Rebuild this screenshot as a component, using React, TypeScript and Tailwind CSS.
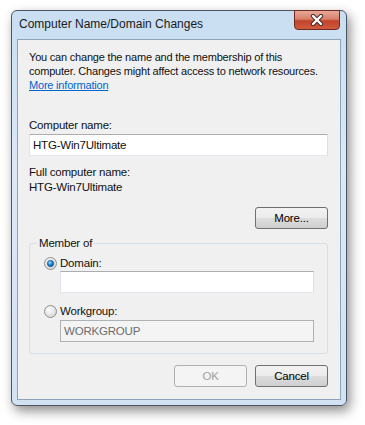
import React from "react";

function Radio({ checked }: { checked: boolean }) {
  return (
    <svg width="13" height="13" viewBox="0 0 13 13" className="shrink-0">
      <defs>
        <radialGradient id={checked ? "rc" : "ru"} cx="40%" cy="35%" r="70%">
          <stop offset="0%" stopColor="#ffffff" />
          <stop offset="100%" stopColor="#d4d4d4" />
        </radialGradient>
        <radialGradient id="dot" cx="40%" cy="35%" r="70%">
          <stop offset="0%" stopColor="#9ae0ff" />
          <stop offset="50%" stopColor="#1f8ad0" />
          <stop offset="100%" stopColor="#0b4a8a" />
        </radialGradient>
      </defs>
      <circle cx="6.5" cy="6.5" r="6" fill={checked ? "url(#rc)" : "url(#ru)"} stroke="#8e8f8f" strokeWidth="1" />
      {checked && <circle cx="6.5" cy="6.5" r="3.2" fill="url(#dot)" stroke="#1a4f7f" strokeWidth="0.6" />}
    </svg>
  );
}

function Button({ label, disabled }: { label: string; disabled?: boolean }) {
  return (
    <div
      className={`w-[73px] h-[22px] rounded-[3px] border flex items-center justify-center ${
        disabled
          ? "border-[#adb2b5] bg-[#f4f4f4] text-[#a0a0a0]"
          : "border-[#707070] bg-[linear-gradient(to_bottom,#f2f2f2_0%,#ebebeb_50%,#dddddd_51%,#cfcfcf_100%)] text-black"
      }`}
    >
      {label}
    </div>
  );
}

export default function App() {
  return (
    <div className="w-[365px] h-[425px] bg-white overflow-hidden font-['Liberation_Sans',sans-serif] text-[11.5px] tracking-[-0.2px] leading-[14px] text-[#111]">
      <div className="relative mt-[10px] ml-[11px] w-[336px] rounded-[6px] border border-[#4b5563] bg-[linear-gradient(to_bottom,#c9def2_0%,#dbe8f6_40%,#d2e2f3_100%)] pt-[28px] px-[5px] pb-[5px] shadow-[3px_5px_12px_rgba(0,0,0,0.45)]">
        {/* Title */}
        <div className="absolute left-[7px] top-[6px] text-[12px] tracking-normal leading-[14px] text-[#1a1a1a]">
          Computer Name/Domain Changes
        </div>
        {/* Close button */}
        <div className="absolute right-[6px] -top-px w-[46px] h-[20px] rounded-b-[4px] border border-[#6e2a1e] bg-[linear-gradient(to_bottom,#e8a999_0%,#d8806a_45%,#c2432c_55%,#d05a40_100%)] flex items-center justify-center">
          <svg width="14" height="12" viewBox="0 0 14 12">
            <path d="M3 2 L11 10 M11 2 L3 10" stroke="#3a2a2a" strokeWidth="4.2" strokeLinecap="round" />
            <path d="M3 2 L11 10 M11 2 L3 10" stroke="#ffffff" strokeWidth="2.4" strokeLinecap="round" />
          </svg>
        </div>

        {/* Client */}
        <div className="border border-[#8ea3ba] bg-[#f0f0f0] pt-[10px] pb-[12px] pl-[11px] pr-[12px]">
          <p className="whitespace-nowrap text-[11px] tracking-[-0.2px]">
            You can change the name and the membership of this
            <br />
            computer. Changes might affect access to network resources.
            <br />
            <span className="text-[#0066cc] underline">More information</span>
          </p>

          <div className="mt-[26px]">Computer name:</div>
          <div className="mt-[2px] h-[22px] border border-[#abadb3] border-l-[#e2e3ea] border-r-[#dbdfe6] border-b-[#e3e9ef] bg-white flex items-center px-[3px]">
            HTG-Win7Ultimate
          </div>

          <div className="mt-[9px]">Full computer name:</div>
          <div className="mt-[1px]">HTG-Win7Ultimate</div>

          <div className="mt-[13px] flex justify-end">
            <Button label="More..." />
          </div>

          {/* Member of group */}
          <div className="relative mt-[14px] border border-[#d5dfe5] rounded-[3px] pt-[12px] pb-[11px] pl-[14px] pr-[13px]">
            <span className="absolute -top-[8px] left-[7px] px-[2px] bg-[#f0f0f0]">Member of</span>
            <div className="flex items-center gap-[3px] h-[14px]">
              <Radio checked />
              <span>Domain:</span>
            </div>
            <div className="mt-[1px] ml-[16px] h-[22px] border border-[#abadb3] border-l-[#e2e3ea] border-r-[#dbdfe6] border-b-[#e3e9ef] bg-white" />
            <div className="mt-[11px] flex items-center gap-[3px] h-[14px]">
              <Radio checked={false} />
              <span>Workgroup:</span>
            </div>
            <div className="mt-[2px] ml-[16px] h-[22px] border border-[#adb2b5] bg-[#f4f4f4] text-[#6d6d6d] flex items-center px-[3px]">
              WORKGROUP
            </div>
          </div>

          <div className="mt-[11px] flex justify-end gap-[8px]">
            <Button label="OK" disabled />
            <Button label="Cancel" />
          </div>
        </div>
      </div>
    </div>
  );
}
